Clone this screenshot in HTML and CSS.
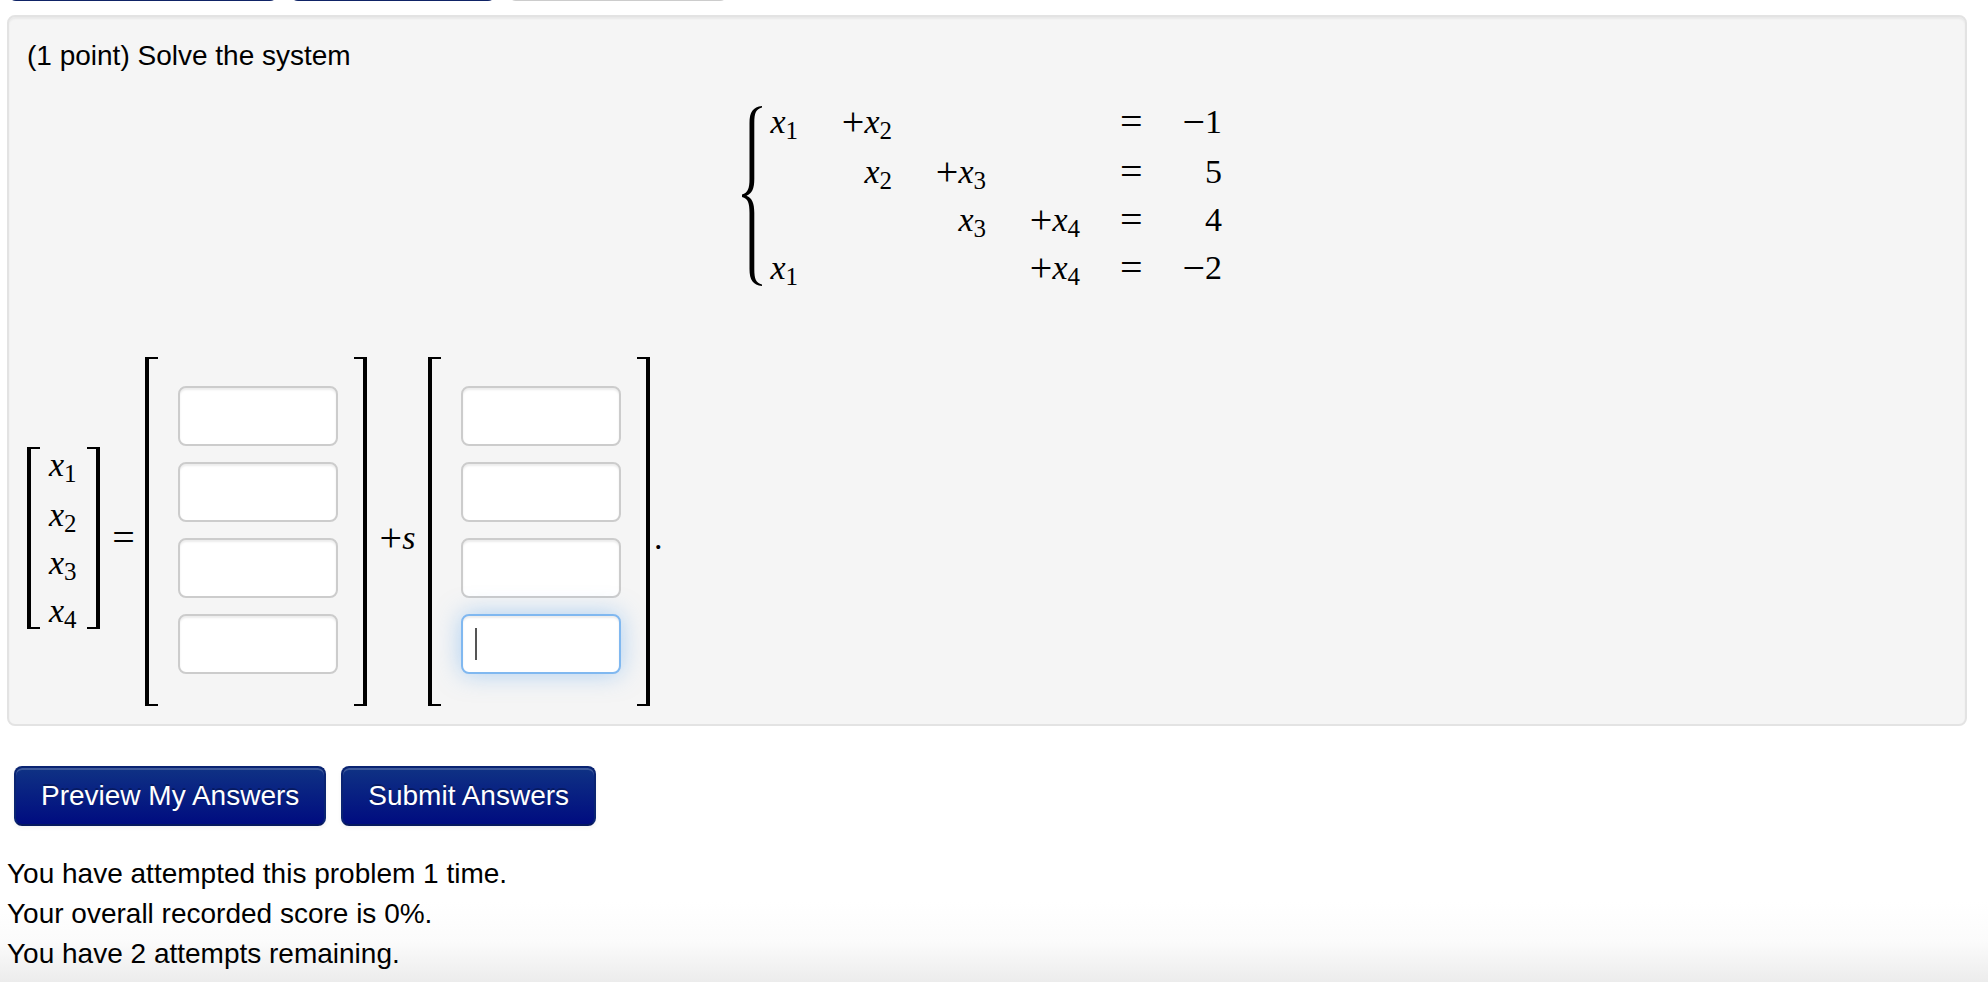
FILE: index.html
```html
<!DOCTYPE html>
<html lang="en">
<head>
<meta charset="utf-8">
<title>Solve the system</title>
<link rel="stylesheet" href="styles.css">
</head>
<body>
<nav class="problem-nav" aria-label="Problem navigation">
  <button class="nav-btn nav-wide" type="button" aria-label="Previous problem"></button>
  <button class="nav-btn nav-narrow" type="button" aria-label="Problem list"></button>
  <button class="nav-btn nav-off" type="button" aria-label="Next problem" disabled></button>
</nav>
<form class="problem-form">
  <main class="well">
    <p class="prompt">(1 point) Solve the system</p>

    <div class="system math">
      <svg class="brace" viewBox="0 0 20 180" aria-hidden="true">
        <path d="M20 0C11 1 7.500 6 7.500 17V73C7.500 82 6 87 0 88.500V91C6 92.500 7.500 97 7.500 107V163C7.500 174 11 179 20 180V178.500C14 177 12.300 173 12.300 163V107C12.300 97 10 92 4.500 89.800C10 87.500 12.300 83 12.300 73V17C12.300 7 14 3 20 1.500Z"/>
      </svg>
      <div class="equations">
        <span><i>x</i><sub>1</sub></span><span><b>+</b><i>x</i><sub>2</sub></span><span></span><span></span><span><b>=</b></span><span><b>−</b>1</span>
        <span></span><span><i>x</i><sub>2</sub></span><span><b>+</b><i>x</i><sub>3</sub></span><span></span><span><b>=</b></span><span>5</span>
        <span></span><span></span><span><i>x</i><sub>3</sub></span><span><b>+</b><i>x</i><sub>4</sub></span><span><b>=</b></span><span>4</span>
        <span><i>x</i><sub>1</sub></span><span></span><span></span><span><b>+</b><i>x</i><sub>4</sub></span><span><b>=</b></span><span><b>−</b>2</span>
      </div>
    </div>

    <div class="answer math">
      <div class="matrix unknowns">
        <span><i>x</i><sub>1</sub></span>
        <span><i>x</i><sub>2</sub></span>
        <span><i>x</i><sub>3</sub></span>
        <span><i>x</i><sub>4</sub></span>
      </div>
      <span class="equals"><b>=</b></span>
      <div class="matrix entries">
        <input type="text" aria-label="Constant vector, row 1">
        <input type="text" aria-label="Constant vector, row 2">
        <input type="text" aria-label="Constant vector, row 3">
        <input type="text" aria-label="Constant vector, row 4">
      </div>
      <span class="plus"><b>+</b><i>s</i></span>
      <div class="matrix entries">
        <input type="text" aria-label="Direction vector, row 1">
        <input type="text" aria-label="Direction vector, row 2">
        <input type="text" aria-label="Direction vector, row 3">
        <input class="active" type="text" aria-label="Direction vector, row 4">
      </div>
      <span class="period">.</span>
    </div>
  </main>

  <div class="actions">
    <button class="btn" type="button">Preview My Answers</button>
    <button class="btn" type="button">Submit Answers</button>
  </div>
</form>
<p class="status">You have attempted this problem 1 time.<br>Your overall recorded score is 0%.<br>You have 2 attempts remaining.</p>
</body>
</html>
```
FILE: styles.css
```css
*,
*::before,
*::after {
  box-sizing: border-box;
}

body {
  margin: 0;
  min-height: 100vh;
  padding: 0 21px 0 7px;
  background: #fff linear-gradient(#fff, #fbfbfb 50%, #ececec) no-repeat bottom / 100% 80px;
  color: #000;
  font: 28px/40px "Liberation Sans", Arial, sans-serif;
}

p {
  margin: 0;
}

/* Only the lower edge of the navigation bar stays in view. */
.problem-nav {
  display: flex;
  align-items: flex-end;
  gap: 12px;
  height: 1px;
  margin: 0 0 14px 1px;
}

.nav-btn {
  flex: none;
  height: 60px;
  border: 2px solid #0f2366;
  border-radius: 8px;
  background: #000c80;
}

.nav-wide {
  width: 270px;
}

.nav-narrow {
  width: 206px;
}

.nav-off {
  width: 220px;
  border-color: #ccc;
  background: #e6e6e6;
}

.well {
  padding: 19px 18px 6px;
  border: 2px solid #e3e3e3;
  border-radius: 8px;
  background: #f5f5f5;
  box-shadow: inset 0 2px 2px rgba(0, 0, 0, 0.05);
}

.math {
  font: 34px/48px "Liberation Serif", "Times New Roman", serif;
}

.math sub {
  font-size: 25px;
  line-height: 0;
  vertical-align: -6px;
}

.math b {
  font-size: 40px;
  font-weight: normal;
  line-height: 0;
  vertical-align: -2px;
}

.system {
  display: flex;
  justify-content: center;
  gap: 8px;
  margin: 22px 10px 0 0;
}

.brace {
  width: 20px;
  height: 180px;
  margin-top: 8px;
}

.equations {
  display: grid;
  grid-template-columns: 28px repeat(3, 54px) 22px 40px;
  grid-template-rows: 50px repeat(3, 48px);
  column-gap: 40px;
  text-align: right;
  white-space: nowrap;
}

.answer {
  display: flex;
  align-items: center;
  margin-top: 65px;
}

.matrix {
  position: relative;
  flex: none;
}

.matrix::before,
.matrix::after {
  content: "";
  position: absolute;
  top: 0;
  bottom: 0;
  width: 13px;
  border: solid #000;
}

.matrix::before {
  left: 0;
  border-width: 2px 0 2px 4px;
}

.matrix::after {
  right: 0;
  border-width: 2px 4px 2px 0;
}

.unknowns {
  display: grid;
  grid-template-rows: 50px repeat(3, 48px);
  align-content: center;
  width: 73px;
  height: 182px;
  padding-left: 22px;
}

.equals {
  width: 45px;
  padding-left: 2px;
  text-align: center;
}

.entries {
  display: grid;
  gap: 16px;
  width: 222px;
  margin-bottom: 12px;
  padding: 29px 29px 32px 33px;
}

.entries input {
  width: 160px;
  height: 60px;
  padding: 8px 12px;
  border: 2px solid #ccc;
  border-radius: 8px;
  background: #fff;
  box-shadow: inset 0 2px 2px rgba(0, 0, 0, 0.075);
  color: #555;
  font: 28px/40px "Liberation Sans", Arial, sans-serif;
  outline: none;
}

.entries .active {
  border-color: #80b8f0;
  background: #fff linear-gradient(#555, #555) no-repeat 12px center / 2px 32px;
  box-shadow: inset 0 2px 2px rgba(0, 0, 0, 0.075), 0 0 24px rgba(100, 170, 240, 0.5);
  caret-color: transparent;
}

.plus {
  width: 61px;
  text-align: center;
}

.period {
  padding-left: 4px;
}

.actions {
  display: flex;
  gap: 15px;
  padding: 40px 7px 28px;
}

.btn {
  height: 60px;
  padding: 0 25px;
  border: 2px solid #0a2472;
  border-bottom-color: #06195f;
  border-radius: 8px;
  background: linear-gradient(#0f3284, #000c80);
  box-shadow: inset 0 2px 0 rgba(255, 255, 255, 0.2), 0 2px 4px rgba(0, 0, 0, 0.05);
  color: #fff;
  font: inherit;
  text-shadow: 0 -2px 0 rgba(0, 0, 0, 0.25);
}
```
